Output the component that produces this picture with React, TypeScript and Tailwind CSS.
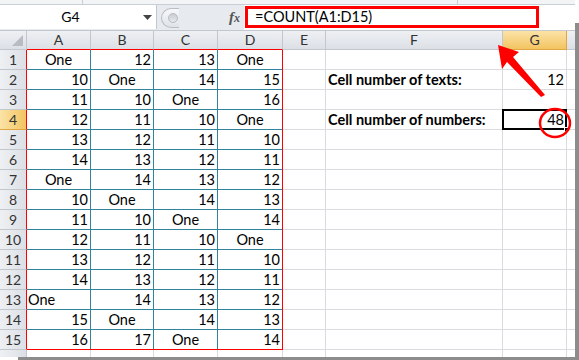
import React from "react";

type Cell = { v: string; align: "l" | "c" | "r" };
const n = (v: string): Cell => ({ v, align: "r" });
const O: Cell = { v: "One", align: "c" };
const OL: Cell = { v: "One", align: "l" };

const data: Cell[][] = [
  [O, n("12"), n("13"), O],
  [n("10"), O, n("14"), n("15")],
  [n("11"), n("10"), O, n("16")],
  [n("12"), n("11"), n("10"), O],
  [n("13"), n("12"), n("11"), n("10")],
  [n("14"), n("13"), n("12"), n("11")],
  [O, n("14"), n("13"), n("12")],
  [n("10"), O, n("14"), n("13")],
  [n("11"), n("10"), O, n("14")],
  [n("12"), n("11"), n("10"), O],
  [n("13"), n("12"), n("11"), n("10")],
  [n("14"), n("13"), n("12"), n("11")],
  [OL, n("14"), n("13"), n("12")],
  [n("15"), O, n("14"), n("13")],
  [n("16"), n("17"), O, n("14")],
];

const font = { fontFamily: "Lato, 'Liberation Sans', sans-serif" };
const rows = Array.from({ length: 15 }, (_, i) => i);

function Header({ label, selected, last, redBottom }: { label: string; selected?: boolean; last?: boolean; redBottom?: boolean }) {
  const bg = selected
    ? "bg-gradient-to-b from-[#fbe3a6] to-[#f3c45f] border-[#e2a543]"
    : "bg-gradient-to-b from-[#eef0f3] to-[#dce0e6] border-[#c2c7ce]";
  const bb = redBottom ? "border-b-[#ff0000]" : "";
  return (
    <div className={`box-border flex items-center justify-center border-r border-b text-[14px] leading-[18px] text-[#333] ${bg} ${bb} ${last ? "border-r-0" : ""}`}>
      {label}
    </div>
  );
}

export default function App() {
  return (
    <div className="w-[579px] h-[360px] bg-white overflow-hidden relative leading-[18px]" style={font}>
      <div className="flex">
        <div className="w-[575px] flex flex-col">
          {/* top strip */}
          <div className="h-[5px] bg-[#f3f4f6] border-b border-[#c9ced6] flex">
            <div className="w-[83px] border-r border-[#c9ced6]" />
            <div className="w-[375px] border-r border-[#c9ced6]" />
          </div>
          {/* formula bar */}
          <div className="h-[26px] flex bg-[#e7eaee] border-b border-[#c3c8cf]">
            <div className="w-[157px] h-[24px] bg-white flex items-center relative border-r border-[#c3c8cf]">
              <span className="w-full text-center text-[14px] text-black pr-[15px]">G4</span>
              <svg className="absolute right-[4px] top-[10px]" width="9" height="5" viewBox="0 0 9 5">
                <polygon points="0,0 9,0 4.5,5" fill="#444" />
              </svg>
            </div>
            <div className="w-[87px] flex items-center">
              <div className="ml-[4px] w-[18px] h-[20px] rounded-l-full border border-[#b9bec6] border-r-0 bg-gradient-to-b from-[#f7f8fa] to-[#dfe3e8] flex items-center justify-center">
                <div className="w-[10px] h-[10px] rounded-full bg-gradient-to-b from-[#c9ccd1] to-[#e8eaed] border border-[#b7bbc1] ml-[4px]" />
              </div>
              <span className="ml-[50px] text-[15px] italic font-bold text-[#555]" style={{ fontFamily: "'Liberation Serif', serif" }}>
                f<span className="text-[12px]">x</span>
              </span>
            </div>
            <div className="flex-1 bg-white flex items-start pt-[1px]">
              <div className="ml-[1px] w-[294px] h-[22px] border-[3px] border-[#ff0000] flex items-center pl-[7px] text-[14.5px] text-black">
                =COUNT(A1:D15)
              </div>
            </div>
          </div>
          {/* column headers */}
          <div className="grid grid-cols-[27px_64px_63px_64px_65px_43px_177px_64px_8px] h-[19px]">
            <div className="box-border border-r border-b border-[#c2c7ce] bg-gradient-to-b from-[#eef0f3] to-[#dce0e6] relative">
              <svg className="absolute right-[3px] bottom-[3px]" width="11" height="11" viewBox="0 0 11 11">
                <polygon points="11,0 11,11 0,11" fill="#b7bcc3" />
              </svg>
            </div>
            <Header label="A" redBottom />
            <Header label="B" redBottom />
            <Header label="C" redBottom />
            <Header label="D" redBottom />
            <Header label="E" />
            <Header label="F" />
            <Header label="G" selected />
            <Header label="" last />
          </div>
          {/* body */}
          <div className="flex text-[14.5px] text-black">
            {/* row headers */}
            <div className="w-[27px] flex flex-col">
              {rows.map((ri) => (
                <div
                  key={ri}
                  className={`h-[20px] box-border flex items-center justify-center border-r border-b text-[14px] text-[#333] border-r-[#ff0000] ${
                    ri === 3
                      ? "bg-gradient-to-r from-[#fbe3a6] to-[#f3c45f] border-b-[#e2a543]"
                      : "bg-gradient-to-r from-[#eef0f3] to-[#dce0e6] border-b-[#c2c7ce]"
                  }`}
                >
                  {ri + 1}
                </div>
              ))}
              <div className="h-[7px] border-r border-[#c2c7ce] bg-gradient-to-r from-[#eef0f3] to-[#dce0e6]" />
            </div>
            {/* A-D data block */}
            <div className="flex flex-col">
              <div className="grid grid-cols-[63px_62px_63px_64px] grid-rows-[repeat(15,19px)] gap-px bg-[#31849b] border-r border-b border-[#ff0000] w-[256px] h-[300px] box-border">
                {data.map((row, ri) =>
                  row.map((c, ci) => (
                    <div
                      key={`${ri}-${ci}`}
                      className={`bg-white h-[19px] flex items-center ${
                        c.align === "r" ? "justify-end pr-[2px]" : c.align === "c" ? "justify-center" : "justify-start pl-[1px]"
                      }`}
                    >
                      {c.v}
                    </div>
                  ))
                )}
              </div>
              <div className="h-[7px] grid grid-cols-[64px_63px_64px_65px]">
                <div className="border-r border-[#d9dbde]" />
                <div className="border-r border-[#d9dbde]" />
                <div className="border-r border-[#d9dbde]" />
                <div className="border-r border-[#d9dbde]" />
              </div>
            </div>
            {/* E-H block */}
            <div className="grid grid-cols-[43px_177px_64px_8px] grid-rows-[repeat(15,20px)_7px]">
              {rows.map((ri) => (
                <React.Fragment key={ri}>
                  <div className="box-border border-r border-b border-[#d9dbde]" />
                  <div className="box-border border-r border-b border-[#d9dbde] flex items-center pl-[2px] font-bold">
                    {ri === 1 ? "Cell number of texts:" : ri === 3 ? "Cell number of numbers:" : ""}
                  </div>
                  <div className="box-border border-r border-b border-[#d9dbde] flex items-center justify-end pr-[2px] relative">
                    {ri === 1 ? "12" : ri === 3 ? "48" : ""}
                    {ri === 3 && (
                      <div className="absolute left-[-1px] top-[-1px] right-[-1px] bottom-[-1px] border-2 border-black">
                        <div className="absolute right-[-4px] bottom-[-4px] w-[5px] h-[5px] bg-black border border-white" />
                      </div>
                    )}
                  </div>
                  <div className="box-border border-b border-[#d9dbde]" />
                </React.Fragment>
              ))}
              <div className="border-r border-[#d9dbde]" />
              <div className="border-r border-[#d9dbde]" />
              <div className="border-r border-[#d9dbde]" />
              <div />
            </div>
          </div>
        </div>
        {/* right shadow */}
        <div className="w-[4px] flex flex-col">
          <div className="h-[23px] bg-white" />
          <div className="flex-1 bg-[#8c8c8c]" />
        </div>
      </div>
      {/* bottom shadow */}
      <div className="flex h-[3px]">
        <div className="w-[18px] bg-white" />
        <div className="flex-1 bg-[#8c8c8c]" />
      </div>
      {/* annotations overlay */}
      <svg className="absolute left-0 top-0 pointer-events-none" width="579" height="360" viewBox="0 0 579 360">
        <polygon points="498,45 519,52 513,57 545,95 541,97 507,62 502,69" fill="#ff0000" />
        <ellipse cx="555" cy="123" rx="15" ry="14" fill="none" stroke="#ff0000" strokeWidth="2.5" />
      </svg>
    </div>
  );
}
